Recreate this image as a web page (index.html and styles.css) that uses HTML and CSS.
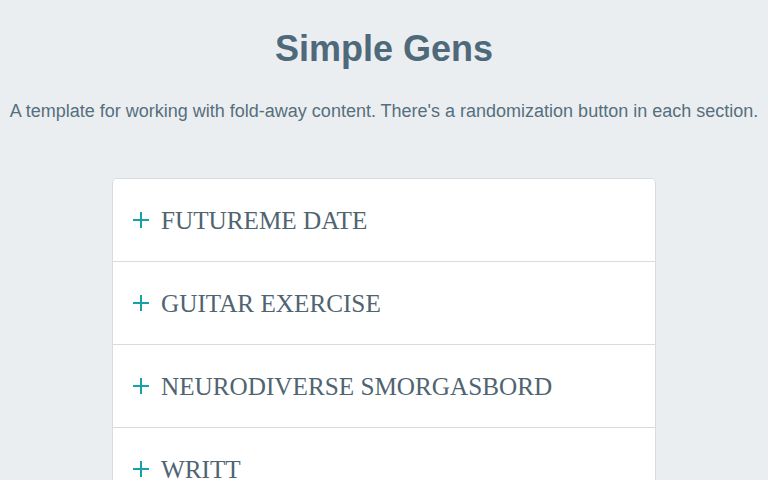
FILE: index.html
```html
<!DOCTYPE html>
<html lang="en">
<head>
    <meta charset="UTF-8">
    <title>Simple Gens</title>
    <link rel="stylesheet" href="styles.css">
</head>
<body>

<div class="page">
    <h1 class="title">Simple Gens</h1>
    <p class="lead">A template for working with fold-away content. There's a randomization button in each section.</p>

    <div class="accordion">
        <div class="section">
            <svg class="plus" width="16" height="16" viewBox="0 0 16 16"><path d="M8 0v16M0 8h16" stroke="#17a2a8" stroke-width="2"/></svg>
            <span class="section-name">FutureMe Date</span>
        </div>
        <div class="section">
            <svg class="plus" width="16" height="16" viewBox="0 0 16 16"><path d="M8 0v16M0 8h16" stroke="#17a2a8" stroke-width="2"/></svg>
            <span class="section-name">Guitar Exercise</span>
        </div>
        <div class="section">
            <svg class="plus" width="16" height="16" viewBox="0 0 16 16"><path d="M8 0v16M0 8h16" stroke="#17a2a8" stroke-width="2"/></svg>
            <span class="section-name">Neurodiverse Smorgasbord</span>
        </div>
        <div class="section">
            <svg class="plus" width="16" height="16" viewBox="0 0 16 16"><path d="M8 0v16M0 8h16" stroke="#17a2a8" stroke-width="2"/></svg>
            <span class="section-name">Writt</span>
        </div>
    </div>
</div>

</body>
</html>
```

FILE: styles.css
```css
body { margin: 0; background: #ebeef1; font-family: "Liberation Sans", Arial, sans-serif; color: #4f6a7a; }
.page { padding-top: 29px; text-align: center; }
.title { margin: 0; font-size: 36px; font-weight: bold; line-height: 40px; color: #4e6a7a; }
.lead { margin: 30px 0 0; font-size: 18px; line-height: 24px; color: #566f7d; }
.accordion { width: 542px; margin: 55px auto 0; background: #fff; border: 1px solid #d8dcdf; border-radius: 4px; text-align: left; }
.section { display: flex; align-items: center; gap: 12px; height: 82px; padding: 0 20px; border-bottom: 1px solid #d8dcdf; }
.section:last-child { border-bottom: none; }
.plus { flex: none; }
.section-name { font-family: "Liberation Serif", "Times New Roman", serif; font-size: 25.2px; line-height: 30px; padding-top: 2px; text-transform: uppercase; color: #4f6470; }
```
